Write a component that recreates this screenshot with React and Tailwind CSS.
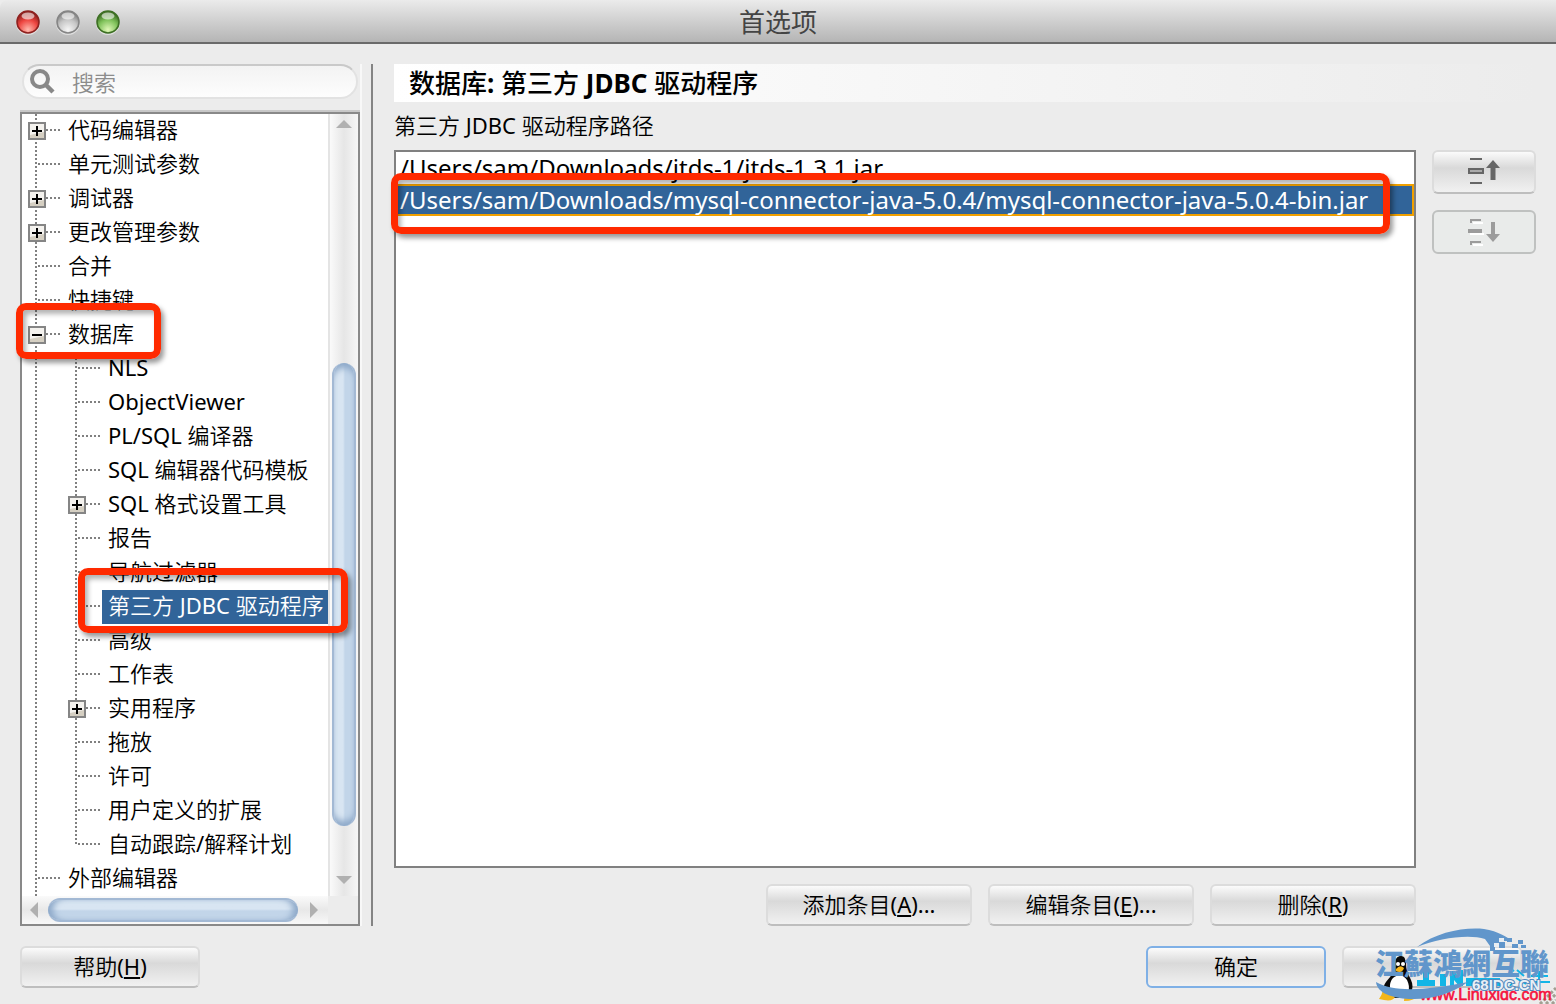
import React, { useState } from "react";
import clsx from "clsx";

const TREE = [
  { label: "代码编辑器", expandable: true },
  { label: "单元测试参数" },
  { label: "调试器", expandable: true },
  { label: "更改管理参数", expandable: true },
  { label: "合并" },
  { label: "快捷键" },
  { label: "数据库", expandable: true, open: true, marked: true },
  { label: "NLS", child: true },
  { label: "ObjectViewer", child: true },
  { label: "PL/SQL 编译器", child: true },
  { label: "SQL 编辑器代码模板", child: true },
  { label: "SQL 格式设置工具", child: true, expandable: true },
  { label: "报告", child: true },
  { label: "导航过滤器", child: true },
  { label: "第三方 JDBC 驱动程序", child: true, marked: true },
  { label: "高级", child: true },
  { label: "工作表", child: true },
  { label: "实用程序", child: true, expandable: true },
  { label: "拖放", child: true },
  { label: "许可", child: true },
  { label: "用户定义的扩展", child: true },
  { label: "自动跟踪/解释计划", child: true, last: true },
  { label: "外部编辑器" },
];

const PATHS = [
  "/Users/sam/Downloads/jtds-1/jtds-1.3.1.jar",
  "/Users/sam/Downloads/mysql-connector-java-5.0.4/mysql-connector-java-5.0.4-bin.jar",
];

// Dotted connector cell, one per tree level. Odd rows shift the dash phase so the dots stay even.
function Guide({ odd, branch, last, expandable, open }) {
  return (
    <svg width="40" height="34" viewBox="0 0 40 34" className="shrink-0" aria-hidden="true">
      <path
        d={last ? "M14 0V17" : "M14 0V34"}
        stroke="#808080"
        strokeWidth="2"
        strokeDasharray="2 2"
        strokeDashoffset={odd ? 2 : 0}
      />
      {branch && <path d="M16 16H38" stroke="#808080" strokeWidth="2" strokeDasharray="2 2" />}
      {expandable && (
        <g>
          <rect x="7" y="9" width="16" height="16" fill="#f4f2ee" stroke="#858585" strokeWidth="2" />
          <path d="M8 24H22V18L8 21Z" fill="#d5cfc2" />
          <path d="M10 17H20" stroke="#000" strokeWidth="2" />
          {!open && <path d="M15 12V22" stroke="#000" strokeWidth="2" />}
        </g>
      )}
    </svg>
  );
}

function Marker({ className }) {
  return (
    <span
      className={clsx(
        "pointer-events-none absolute z-10 rounded-[10px] border-[7px] border-[#ff2a00] shadow-[3px_4px_5px_rgba(0,0,0,0.4),inset_3px_4px_5px_rgba(0,0,0,0.3)]",
        className
      )}
    />
  );
}

function TreeRow({ item, odd, selected, onSelect }) {
  return (
    <li role="treeitem" aria-selected={selected} className="relative flex h-[34px]">
      {item.child && <Guide odd={odd} />}
      <Guide branch odd={odd} expandable={item.expandable} open={item.open} last={item.last} />
      <button
        onClick={onSelect}
        className={clsx(
          "min-w-0 flex-1 whitespace-nowrap px-1.5 pb-1 text-left leading-[30px]",
          selected ? "bg-[#316499] text-white" : "text-black"
        )}
      >
        {item.label}
      </button>
      {item.marked && (
        <Marker className={item.child ? "-right-5 left-14 -top-[22px] h-[65px]" : "-left-1.5 -top-[15px] h-14 w-[145px]"} />
      )}
    </li>
  );
}

function PushButton({ children, primary, className, ...rest }) {
  return (
    <button
      className={clsx(
        "min-h-[42px] rounded-md border-2 bg-linear-to-b from-[#fbfbfb] via-[#d9d9d9] via-40% to-[#f1f1f1] pb-0.5 leading-9",
        primary ? "border-[#7fb0e6]" : "border-[#dcdcdc] border-b-[#bebebe]",
        className
      )}
      {...rest}
    >
      {children}
    </button>
  );
}

function Mnemonic({ children }) {
  return <span className="underline decoration-2 underline-offset-2">{children}</span>;
}

function TrafficLight({ id, rim, base, glow, label }) {
  return (
    <button aria-label={label} className="h-6 w-6">
      <svg width="24" height="26" viewBox="0 0 24 26">
        <defs>
          <radialGradient id={id} cx="50%" cy="85%" r="75%">
            <stop offset="0" stopColor={glow} />
            <stop offset="0.6" stopColor={base} />
            <stop offset="1" stopColor={rim} />
          </radialGradient>
        </defs>
        <circle cx="12" cy="14" r="12" fill="#fff" opacity="0.5" />
        <circle cx="12" cy="13" r="11" fill={`url(#${id})`} stroke={rim} strokeWidth="1.6" />
        <ellipse cx="12" cy="7" rx="6.5" ry="3.5" fill="#fff" opacity="0.6" />
      </svg>
    </button>
  );
}

function Watermark() {
  return (
    <svg
      width="190"
      height="84"
      viewBox="0 0 190 84"
      className="pointer-events-none absolute bottom-0 right-0 z-20"
      aria-hidden="true"
    >
      {/* resize grip */}
      <path d="M174 84L190 68M180 84L190 74M186 84L190 80" stroke="#a39f92" strokeWidth="3" strokeDasharray="3 2" />
      {/* cyan lettering behind the logo */}
      <path d="M57 50H63V60H69V66H51V60H57Z" fill="#12b5e6" />
      <path d="M74 54H80V66H74ZM84 51H89L92 57V50H97V66H93L88 60V66H84ZM100 58H134V66H100Z" fill="#12b5e6" />
      <path d="M143 54L148 50M151 50L158 56M147 62L144 66M150 58L160 64M165 56H182M173 51V66M163 62H184" stroke="#12b5e6" strokeWidth="2" />
      {/* penguin */}
      <path d="M29 43C29 35 39 34 40 43C40 50 42 53 45 60C49 69 45 77 33 78C19 78 14 70 20 62C25 56 29 52 29 43Z" fill="#080808" />
      <path d="M27 58C32 54 37 54 41 60C45 68 43 76 34 76C24 76 21 65 27 58Z" fill="#fff" />
      <path d="M17 70L29 76Q28 83 13 79Q16 75 17 70ZM42 72L52 75Q49 81 38 81Q38 75 42 72Z" fill="#f3b61b" />
      <text x="54" y="80" fontSize="16" fontFamily="Liberation Sans, sans-serif" stroke="#f5123d" strokeWidth="0.6" fill="#f5123d">
        www.Linuxidc.com
      </text>
      {/* swoosh */}
      <path d="M51 27C71 12 98 7 118 9C132 11 143 18 146 21H138V26H124L119 19C103 14 73 18 51 27Z" fill="#6196cb" />
      <path d="M124 20H129V31H124ZM133 22H139V28H133ZM141 18H146V22H141ZM146 24H152V28H146ZM152 20H157V24H152ZM155 25H160V28H155Z" fill="#6196cb" />
      <path d="M133 18H138V22H133ZM128 23H133V27H128Z" fill="#e8eef3" />
      <path d="M10 62C29 73 61 70 102 62C83 75 64 80 43 79C26 78 11 73 10 62Z" fill="#6196cb" />
      <text
        x="9"
        y="55"
        fontSize="29"
        fontWeight="900"
        fontFamily="Noto Sans CJK TC, sans-serif"
        fill="#6196cb"
      >
        江蘇鴻網互聯
      </text>
      {/* penguin face shows through the lettering */}
      <path d="M30 42Q30 36 35 36Q40 36 39 43L38 48H30Z" fill="#080808" />
      <circle cx="32" cy="44" r="2" fill="#fff" />
      <circle cx="37" cy="44" r="2" fill="#fff" />
      <path d="M30 49Q34 44 38 48Q36 54 30 51Z" fill="#f7b519" />
      <text
        x="106"
        y="70"
        fontSize="15"
        fontWeight="700"
        fontFamily="Liberation Sans, sans-serif"
        fill="#e9f0f6"
        stroke="#5288bd"
        strokeWidth="2"
        paintOrder="stroke"
      >
        68IDC.CN
      </text>
    </svg>
  );
}

export default function App() {
  const [selectedNode, setSelectedNode] = useState(14);
  const [selectedPath, setSelectedPath] = useState(1);

  return (
    <div className="relative flex min-h-screen flex-col overflow-hidden bg-[#ececec] font-['Noto_Sans','Noto_Sans_CJK_SC_DemiLight','Noto_Sans_CJK_SC_Light','Noto_Sans_CJK_SC',sans-serif] text-[22px] leading-[30px] text-black">
      {/* Title bar */}
      <header className="grid h-11 grid-cols-[1fr_auto_1fr] items-center rounded-tl-lg border-b-2 border-[#6a6a6a] bg-linear-to-b from-[#ebebeb] to-[#b5b5b5] px-4">
        <div className="flex gap-4">
          <TrafficLight id="close" label="关闭" rim="#8e211f" base="#ee4540" glow="#ffb9ae" />
          <TrafficLight id="minimize" label="最小化" rim="#858585" base="#c6c6c6" glow="#f6f6f6" />
          <TrafficLight id="zoom" label="缩放" rim="#3d6f24" base="#7fc25a" glow="#e0f8b8" />
        </div>
        <h1 className="pt-0.5 font-['Noto_Sans','Noto_Sans_CJK_SC',sans-serif] text-[26px] text-[#444]">首选项</h1>
      </header>

      <div className="flex flex-1 px-5 pt-5">
        {/* Category sidebar */}
        <aside className="flex w-[340px] shrink-0 flex-col">
          <label className="mx-0.5 flex h-[35px] items-center gap-4 rounded-full border-2 border-[#e2e2e2] border-t-[#c9c9c9] bg-linear-to-b from-[#f3f3f3] to-[#fdfdfd] pl-1.5">
            <svg width="26" height="26" viewBox="0 0 26 26" aria-hidden="true">
              <circle cx="10" cy="10" r="8" fill="none" stroke="#888" strokeWidth="4" />
              <path d="M16 16L23 23" stroke="#888" strokeWidth="4.5" />
            </svg>
            <input
              type="text"
              placeholder="搜索"
              aria-label="搜索"
              className="min-w-0 flex-1 bg-transparent outline-none placeholder:text-[#8c8c8c]"
            />
          </label>

          <div className="mt-[11px] flex flex-1 flex-col border-t-2 border-[#c8c8c8]">
            <div className="flex flex-1 flex-col border-2 border-[#898989] bg-white">
              <div className="flex flex-1">
                <ul role="tree" className="min-w-0 flex-1">
                  {TREE.map((item, i) => (
                    <TreeRow
                      key={item.label}
                      item={item}
                      odd={i % 2 === 1}
                      selected={i === selectedNode}
                      onSelect={() => setSelectedNode(i)}
                    />
                  ))}
                </ul>
                {/* Vertical scroll bar */}
                <div className="flex w-[30px] flex-col items-center border-l-2 border-[#e4e4e4] bg-linear-to-r from-[#fafafa] via-[#e6e6e6] to-[#f6f6f6] py-1.5">
                  <svg width="16" height="8" viewBox="0 0 16 8" aria-hidden="true">
                    <path d="M0 8L8 0L16 8Z" fill="#b0b0b0" />
                  </svg>
                  <div className="flex-[234]" />
                  <div className="w-6 flex-[462] rounded-full border-x-2 border-[#a3b9d4] bg-linear-to-r from-[#d8e5f2] from-45% to-[#c2d5e9] to-55% shadow-[inset_0_8px_6px_-3px_#8ea9c9,inset_0_-8px_6px_-3px_#8ea9c9]" />
                  <div className="flex-[50]" />
                  <svg width="16" height="8" viewBox="0 0 16 8" aria-hidden="true">
                    <path d="M0 0L8 8L16 0Z" fill="#b0b0b0" />
                  </svg>
                  <div className="h-1.5" />
                </div>
              </div>
              {/* Horizontal scroll bar */}
              <div className="flex h-7 bg-[#ececec]">
                <div className="flex flex-1 items-center bg-linear-to-b from-[#fafafa] via-[#e8e8e8] to-[#f8f8f8] px-2">
                  <svg width="8" height="16" viewBox="0 0 8 16" aria-hidden="true">
                    <path d="M8 0L0 8L8 16Z" fill="#b0b0b0" />
                  </svg>
                  <div className="ml-2.5 h-6 w-[250px] rounded-full border-y-2 border-[#a3b9d4] bg-linear-to-b from-[#d8e5f2] from-45% to-[#c2d5e9] to-55% shadow-[inset_8px_0_6px_-3px_#8ea9c9,inset_-8px_0_6px_-3px_#8ea9c9]" />
                  <svg width="8" height="16" viewBox="0 0 8 16" className="ml-3" aria-hidden="true">
                    <path d="M0 0L8 8L0 16Z" fill="#b0b0b0" />
                  </svg>
                </div>
                <div className="w-[30px]" />
              </div>
            </div>
          </div>
        </aside>

        {/* Split divider */}
        <div className="w-[13px] shrink-0 border-l-2 border-l-[#f8f8f8] border-r-2 border-r-[#848484]" />

        {/* Settings panel */}
        <main className="ml-[21px] flex min-w-0 flex-1 flex-col">
          <h2 className="bg-linear-to-r from-white to-[#ececec] px-[15px] font-['Noto_Sans','Noto_Sans_CJK_SC',sans-serif] text-[26px] font-medium leading-[38px]">
            数据库<span className="font-bold">:</span> 第三方 <span className="font-bold">JDBC</span> 驱动程序
          </h2>
          <h3 id="path-label" className="mt-2 h-10">
            第三方 JDBC 驱动程序路径
          </h3>
          <div className="flex flex-1 gap-4">
            <div className="flex min-w-0 flex-1 flex-col gap-4">
              <ul
                role="listbox"
                aria-labelledby="path-label"
                className="flex-1 border-2 border-[#808080] bg-white text-[24px]"
              >
                {PATHS.map((path, i) => (
                  <li
                    key={path}
                    role="option"
                    aria-selected={i === selectedPath}
                    onClick={() => setSelectedPath(i)}
                    className={clsx(
                      "relative h-8 whitespace-nowrap border-2 px-0.5 leading-7",
                      i === selectedPath ? "border-[#f0a000] bg-[#316499] text-white" : "border-transparent"
                    )}
                  >
                    {path}
                    {i === 1 && <Marker className="-left-[7px] right-[22px] -top-[13px] h-[61px]" />}
                  </li>
                ))}
              </ul>
              <div className="flex justify-end gap-4">
                <PushButton className="w-[206px]">添加条目(<Mnemonic>A</Mnemonic>)...</PushButton>
                <PushButton className="w-[206px]">编辑条目(<Mnemonic>E</Mnemonic>)...</PushButton>
                <PushButton className="w-[206px]">删除(<Mnemonic>R</Mnemonic>)</PushButton>
              </div>
            </div>
            <div className="flex w-[104px] flex-col gap-4">
              <PushButton aria-label="上移" className="flex h-11 items-center justify-center">
                <svg width="32" height="28" viewBox="0 0 32 28" aria-hidden="true">
                  <path d="M2 2H14M2 26H14" stroke="#666" strokeWidth="2" />
                  <rect x="1" y="12" width="14" height="4" fill="#aaa" stroke="#666" strokeWidth="2" />
                  <path d="M25 23V8" stroke="#666" strokeWidth="5" />
                  <path d="M18 11L25 3L32 11Z" fill="#666" />
                </svg>
              </PushButton>
              <button
                disabled
                aria-label="下移"
                className="flex h-11 items-center justify-center rounded-md border-2 border-[#bfc1c0] bg-[#e9ebea]"
              >
                <svg width="32" height="28" viewBox="0 0 32 28" aria-hidden="true">
                  <path d="M5 5H15M5 27H15M2 16H16" stroke="#fff" strokeWidth="2" />
                  <path d="M3 5V2H13M3 27V24H13" fill="none" stroke="#9c9c9c" strokeWidth="2" />
                  <path d="M0 13H14" stroke="#9c9c9c" strokeWidth="4" />
                  <path d="M25 4V17" stroke="#9c9c9c" strokeWidth="4" />
                  <path d="M18 16H32L25 24Z" fill="#9c9c9c" />
                </svg>
              </button>
            </div>
          </div>
        </main>
      </div>

      {/* Dialog footer */}
      <footer className="flex gap-4 pb-4 pl-5 pr-[34px] pt-5">
        <PushButton className="w-[180px]">帮助(<Mnemonic>H</Mnemonic>)</PushButton>
        <div className="flex-1" />
        <PushButton primary className="w-[180px]">确定</PushButton>
        <PushButton aria-label="取消" className="w-[180px]" />
      </footer>

      <Watermark />
    </div>
  );
}
